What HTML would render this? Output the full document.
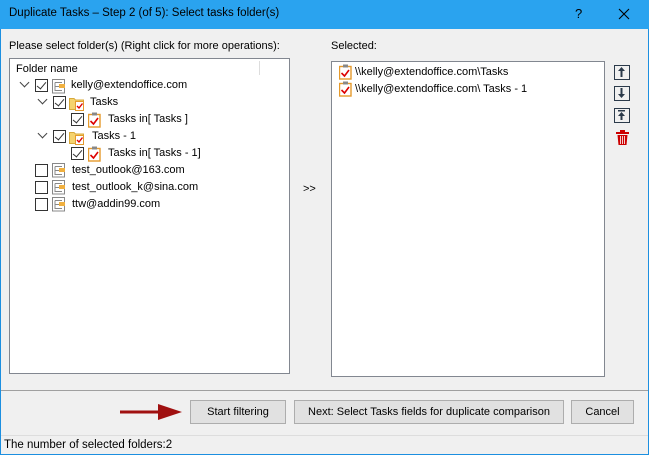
<!DOCTYPE html>
<html><head><style>
*{margin:0;padding:0;box-sizing:border-box}
body{width:649px;height:455px;background:#f0f0f0;font-family:"Liberation Sans",sans-serif;font-size:11px;color:#000;position:relative;overflow:hidden}
.win{position:absolute;left:0;top:0;width:649px;height:455px;border:1px solid #1c8fe0;}
.title{position:absolute;left:0;top:0;width:649px;height:29px;background:#2aa3ef;}
.title span{position:absolute;left:9px;top:7px;font-size:11.5px;color:#000}
.a{position:absolute;white-space:nowrap}
.box{position:absolute;background:#fff;border:1px solid #828790}
.cb{position:absolute;width:13px;height:13px;border:1px solid #333;background:#fff}
.cb.c::after{content:"";position:absolute;left:3px;top:0px;width:4px;height:8px;border:solid #333;border-width:0 1.3px 1.3px 0;transform:rotate(40deg)}
.chev{position:absolute;width:7px;height:7px;border:solid #444;border-width:0 1.5px 1.5px 0;transform:rotate(45deg)}
.btn{position:absolute;height:24px;background:#e1e1e1;border:1px solid #adadad;text-align:center;line-height:22px;font-size:11px}
.sb{position:absolute;left:614px;width:16px;height:15px;border:1.5px solid #2b3a4a;background:#f0f0f0}
</style></head><body>
<div class="win"></div>
<div class="title"><span>Duplicate Tasks – Step 2 (of 5): Select tasks folder(s)</span>
<span style="left:575px;top:6px;font-size:13px">?</span>
<svg style="position:absolute;left:618px;top:8px" width="12" height="12"><path d="M1 1L11 11M11 1L1 11" stroke="#000" stroke-width="1.1"/></svg></div>
<div class="a" style="left:9px;top:40px">Please select folder(s) (Right click for more operations):</div>
<div class="a" style="left:331px;top:40px">Selected:</div>
<div class="box" style="left:9px;top:58px;width:281px;height:316px">
<div style="position:absolute;left:249px;top:2px;width:1px;height:14px;background:#ddd"></div>
<div class="a" style="left:6px;top:4px">Folder name</div>
</div>
<div class="box" style="left:331px;top:61px;width:274px;height:316px"></div>
<div id="tree"></div>
<div class="a" style="left:303px;top:183px">&gt;&gt;</div>
<div class="sb" style="top:65px"><svg width="13" height="12" style="position:absolute;left:0;top:0"><path d="M6.5 1L3 5H5.5V11H7.5V5H10Z" fill="#2b3a4a"/></svg></div>
<div class="sb" style="top:86px"><svg width="13" height="12" style="position:absolute;left:0;top:0"><path d="M6.5 11L3 7H5.5V1H7.5V7H10Z" fill="#2b3a4a"/></svg></div>
<div class="sb" style="top:108px"><svg width="13" height="12" style="position:absolute;left:0;top:0"><path d="M6.5 3L3 7H5.5V11H7.5V7H10Z" fill="#2b3a4a"/><rect x="3" y="1" width="7" height="1.5" fill="#2b3a4a"/></svg></div>
<svg style="position:absolute;left:615px;top:130px" width="15" height="15"><rect x="1" y="2" width="13" height="2" fill="#c00"/><rect x="5" y="0" width="5" height="2" fill="#c00"/><path d="M2.5 5H12.5L11.5 15H3.5Z" fill="#c00"/><path d="M5.5 6V14M7.5 6V14M9.5 6V14" stroke="#fff" stroke-width="0.8"/></svg>
<div style="position:absolute;left:1px;top:390px;width:647px;height:1px;background:#a0a0a0"></div>
<svg style="position:absolute;left:118px;top:401px" width="68" height="22"><path d="M2 11H45" stroke="#a01010" stroke-width="3"/><path d="M40 3L64 11L40 19Z" fill="#a01010"/></svg>
<div class="btn" style="left:190px;top:400px;width:96px">Start filtering</div>
<div class="btn" style="left:294px;top:400px;width:270px">Next: Select Tasks fields for duplicate comparison</div>
<div class="btn" style="left:571px;top:400px;width:63px">Cancel</div>
<div style="position:absolute;left:1px;top:435px;width:647px;height:1px;background:#ddd"></div>
<div class="a" style="left:4px;top:439px;font-size:11.5px">The number of selected folders:2</div>
<script>
var t=document.getElementById('tree'),h='';
function acct(x,y){return '<svg style="position:absolute;left:'+x+'px;top:'+y+'px" width="14" height="15"><rect x="0.5" y="0.5" width="12" height="13.5" fill="#fff" stroke="#888"/><path d="M3 3.5H10M3 3.5V11.5H10M3 7.5H7" stroke="#888" fill="none"/><rect x="7" y="5" width="6" height="4" fill="#f0b040"/></svg>';}
function fold(x,y){return '<svg style="position:absolute;left:'+x+'px;top:'+y+'px" width="16" height="15"><path d="M0.5 2.5H5L6.5 4H14.5V13.5H0.5Z" fill="#f5d36e" stroke="#d8a93a"/><rect x="6.5" y="5.5" width="8" height="9" fill="#fff" stroke="#e59a2c"/><path d="M8 10L10 12L13.5 7.5" stroke="#d00" stroke-width="1.4" fill="none"/></svg>';}
function task(x,y){return '<svg style="position:absolute;left:'+x+'px;top:'+y+'px" width="13" height="16"><rect x="0.5" y="2.5" width="11.5" height="12.5" fill="#fff" stroke="#e59a2c" stroke-width="1.4"/><rect x="4" y="0.5" width="5" height="3" fill="#888"/><path d="M2.5 9L5.5 12L10 6" stroke="#d00" stroke-width="1.6" fill="none"/></svg>';}
function chev(x,y){return '<div class="chev" style="left:'+x+'px;top:'+y+'px"></div>';}
function cb(x,y,c){return '<div class="cb'+(c?' c':'')+'" style="left:'+x+'px;top:'+y+'px"></div>';}
function tx(x,y,s){return '<div class="a" style="left:'+x+'px;top:'+y+'px">'+s+'</div>';}
h+=chev(21,79)+cb(35,79,1)+acct(52,79)+tx(71,79,'kelly@extendoffice.com');
h+=chev(39,96)+cb(53,96,1)+fold(69,96)+tx(90,96,'Tasks');
h+=cb(71,113,1)+task(88,112)+tx(108,113,'Tasks in[ Tasks ]');
h+=chev(39,130)+cb(53,130,1)+fold(69,130)+tx(92,130,'Tasks - 1');
h+=cb(71,147,1)+task(88,146)+tx(108,147,'Tasks in[ Tasks - 1]');
h+=cb(35,164,0)+acct(52,163)+tx(72,164,'test_outlook@163.com');
h+=cb(35,181,0)+acct(52,180)+tx(72,181,'test_outlook_k@sina.com');
h+=cb(35,198,0)+acct(52,197)+tx(72,198,'ttw@addin99.com');
h+=task(339,64)+tx(355,66,'\\\\kelly@extendoffice.com\\Tasks');
h+=task(339,81)+tx(355,83,'\\\\kelly@extendoffice.com\\ Tasks - 1');
t.innerHTML=h;
</script>
</body></html>
